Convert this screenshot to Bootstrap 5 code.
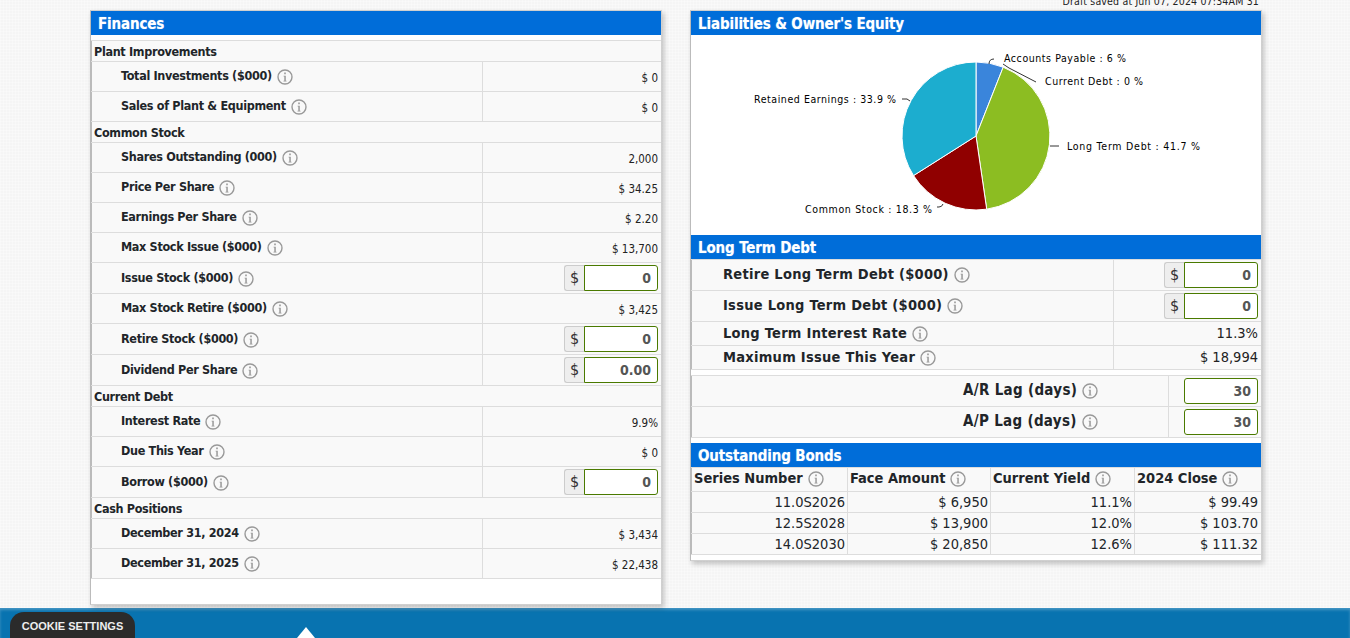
<!DOCTYPE html>
<html lang="en">
<head>
<meta charset="utf-8">
<title>Finances</title>
<link href="https://cdn.jsdelivr.net/npm/bootstrap@5.3.0/dist/css/bootstrap.min.css" rel="stylesheet">
<style>
html,body{height:638px;overflow:hidden}
body{font-family:"DejaVu Sans","Liberation Sans",sans-serif;font-stretch:condensed;color:#000;
  background-color:#f5f5f5;
  background-image:repeating-linear-gradient(0deg,rgba(255,255,255,.35) 0 1px,transparent 1px 3px),repeating-linear-gradient(90deg,rgba(255,255,255,.35) 0 1px,transparent 1px 3px)}
.stage{height:608px}
.draft-line{height:10px;width:1261px;overflow:hidden;font-size:10.5px;line-height:10px;padding:0 2px 4px 0;color:#222;letter-spacing:.17px}
.columns{gap:28px;padding-left:90px}
.panel{width:572px;background:#fff;border:1px solid #d0d0d0;border-left-color:#bbb;box-shadow:2px 3px 5px rgba(0,0,0,.22)}
.panel-left{height:595px}
.panel-right{height:551px}
.bar{background:#006dd9;color:#fff;font-weight:700;font-size:15px;letter-spacing:-.14px;height:24px;line-height:26px;padding-left:7px;text-shadow:0 0 1px rgba(255,255,255,.5)}
.gap5{height:5px}
.fin{width:100%;table-layout:fixed;margin:0;border-collapse:collapse;--bs-table-bg:#f9f9f9;--bs-table-border-color:#ddd;--bs-border-color:#ddd}
.fin>tbody>tr>td{padding:0 3px;vertical-align:middle;border:1px solid #ddd;background:#f9f9f9}
.fin>tbody>tr>td:first-child{border-left:1px solid #bbb}
.fin>tbody>tr>td:last-child{border-right:0}
.fin>tbody>tr.fin-s>td{font-size:12.5px;font-weight:700;line-height:1;letter-spacing:-.33px;padding:2px 3px 0 2px}
.h21 td{height:21px}.h30 td{height:30px}.h31 td{height:31px}.h24 td{height:24px}
.fin>tbody>tr>td.lab{font-weight:700;font-size:12.5px;letter-spacing:-.33px;padding-left:29px;line-height:1}
.fin:not(.big)>tbody>tr.h31>td.lab{padding-top:2px}
.fin>tbody>tr>td.val{text-align:right;font-size:11.5px;color:#222;line-height:1;padding-top:4px}
.fin.big>tbody>tr>td.lab{font-size:14.5px;letter-spacing:.27px;padding-left:31px}
.fin.big>tbody>tr>td.val{font-size:14.5px;padding-top:0}
.fin.ar>tbody>tr>td.lab{padding-left:271px;font-size:15px;letter-spacing:.3px}
.ii{width:16px;height:16px;margin-left:5px;vertical-align:-5px}
.big .ii,.bonds .ii{vertical-align:-4px}
.inp-grp{display:flex;justify-content:flex-end}
.add-on{width:20px;height:26px;background:#eee;border:1px solid #ccc;border-right:0;border-radius:3px 0 0 3px;font-size:16px;text-align:center;line-height:24px;color:#333}
.inp-box{width:74px;height:26px;padding:0 6px;border:1px solid #4a7a00;border-radius:3px;background:#fff;text-align:right;font-weight:700;font-size:14px;color:#555;font-family:inherit;font-stretch:inherit;outline:0}
.add-on+.inp-box{border-top-left-radius:0;border-bottom-left-radius:0}
.bonds td{font-size:14.5px;line-height:1}
.fin.bonds>tbody>tr.hd>td{font-weight:700;text-align:left;padding:0 2px 2px}
.fin.bonds>tbody>tr>td.num{text-align:right;padding-right:2px}
.fin.bonds>tbody>tr>td.num:last-child{padding-right:3px}
.chart-wrap{height:200px}
.chart-wrap svg{display:block}
.chart-wrap text{font-family:"DejaVu Sans","Liberation Sans",sans-serif;font-stretch:condensed;font-size:10.5px;fill:#000}
.foot{height:30px;background:#0873b0;box-shadow:inset 0 2px 3px rgba(255,255,255,.25)}
.cookie{margin:4px 0 0 10px;width:125px;height:26px;background:#2b2b2b;border-radius:14px 14px 0 0;color:#eee;font:700 11px/29px "Liberation Sans",Arial,sans-serif;text-align:center}
.tri{margin:19px 0 0 162px;width:0;height:0;border-left:9px solid transparent;border-right:9px solid transparent;border-bottom:11px solid #fff}
</style>
</head>
<body>
<svg width="0" height="0" class="d-block" aria-hidden="true"><symbol id="ii" viewBox="0 0 16 16"><circle cx="8" cy="8" r="7" fill="none" stroke="#999" stroke-width="1.4"/><path d="M7.2 3.6h1.6v1.6H7.2zM6.6 6.7h2.2v5.1h.7v.8H6.5v-.8h.8V7.5h-.7z" fill="#999"/></symbol></svg>
<div class="stage">
  <div class="draft-line d-flex justify-content-end align-items-end">Draft saved at Jun 07, 2024 07:34AM 31</div>
  <div class="columns d-flex align-items-start">
    <section class="panel panel-left">
      <div class="bar">Finances</div>
      <div class="gap5"></div>
      <table class="table fin">
        <colgroup><col style="width:391px"><col></colgroup>
        <tbody>
        <tr class="fin-s h21"><td colspan="2">Plant Improvements</td></tr>
        <tr class="h30"><td class="lab">Total Investments ($000)<svg class="ii"><use href="#ii"/></svg></td><td class="val">$ 0</td></tr>
        <tr class="h30"><td class="lab">Sales of Plant &amp; Equipment<svg class="ii"><use href="#ii"/></svg></td><td class="val">$ 0</td></tr>
        <tr class="fin-s h21"><td colspan="2">Common Stock</td></tr>
        <tr class="h30"><td class="lab">Shares Outstanding (000)<svg class="ii"><use href="#ii"/></svg></td><td class="val">2,000</td></tr>
        <tr class="h30"><td class="lab">Price Per Share<svg class="ii"><use href="#ii"/></svg></td><td class="val">$ 34.25</td></tr>
        <tr class="h30"><td class="lab">Earnings Per Share<svg class="ii"><use href="#ii"/></svg></td><td class="val">$ 2.20</td></tr>
        <tr class="h30"><td class="lab">Max Stock Issue ($000)<svg class="ii"><use href="#ii"/></svg></td><td class="val">$ 13,700</td></tr>
        <tr class="h31"><td class="lab">Issue Stock ($000)<svg class="ii"><use href="#ii"/></svg></td><td><div class="inp-grp"><span class="add-on">$</span><input class="inp-box" value="0"></div></td></tr>
        <tr class="h30"><td class="lab">Max Stock Retire ($000)<svg class="ii"><use href="#ii"/></svg></td><td class="val">$ 3,425</td></tr>
        <tr class="h31"><td class="lab">Retire Stock ($000)<svg class="ii"><use href="#ii"/></svg></td><td><div class="inp-grp"><span class="add-on">$</span><input class="inp-box" value="0"></div></td></tr>
        <tr class="h31"><td class="lab">Dividend Per Share<svg class="ii"><use href="#ii"/></svg></td><td><div class="inp-grp"><span class="add-on">$</span><input class="inp-box" value="0.00"></div></td></tr>
        <tr class="fin-s h21"><td colspan="2">Current Debt</td></tr>
        <tr class="h30"><td class="lab">Interest Rate<svg class="ii"><use href="#ii"/></svg></td><td class="val">9.9%</td></tr>
        <tr class="h30"><td class="lab">Due This Year<svg class="ii"><use href="#ii"/></svg></td><td class="val">$ 0</td></tr>
        <tr class="h31"><td class="lab">Borrow ($000)<svg class="ii"><use href="#ii"/></svg></td><td><div class="inp-grp"><span class="add-on">$</span><input class="inp-box" value="0"></div></td></tr>
        <tr class="fin-s h21"><td colspan="2">Cash Positions</td></tr>
        <tr class="h30"><td class="lab">December 31, 2024<svg class="ii"><use href="#ii"/></svg></td><td class="val">$ 3,434</td></tr>
        <tr class="h30"><td class="lab">December 31, 2025<svg class="ii"><use href="#ii"/></svg></td><td class="val">$ 22,438</td></tr>
        </tbody>
      </table>
    </section>
    <section class="panel panel-right">
      <div class="bar">Liabilities &amp; Owner's Equity</div>
      <div class="chart-wrap">
        <svg width="570" height="200" viewBox="691 35 570 200" role="img" aria-label="Liabilities pie chart">
          <g stroke="#fff" stroke-width="1" stroke-linejoin="round">
            <path d="M976 136V62A74 74 0 0 1 1003.2 67.2Z" fill="#3a85db"/>
            <path d="M976 136L1003.2 67.2A74 74 0 0 1 986.7 209.2Z" fill="#8cbd22"/>
            <path d="M976 136L986.7 209.2A74 74 0 0 1 913.5 175.6Z" fill="#900000"/>
            <path d="M976 136L913.5 175.6A74 74 0 0 1 976 62Z" fill="#1cadcf"/>
          </g>
          <g fill="none" stroke="#333" stroke-width="1">
            <path d="M989 64q0-5 5-5"/>
            <path d="M1003 64l6 4 27 14"/>
            <path d="M1050 146h9"/>
            <path d="M902 99q6-1 8 2"/>
            <path d="M937 207h2q3 0 4-3"/>
          </g>
          <text x="1004" y="62" textLength="122">Accounts Payable : 6 %</text>
          <text x="1045" y="85" textLength="98">Current Debt : 0 %</text>
          <text x="1067" y="150" textLength="133">Long Term Debt : 41.7 %</text>
          <text x="754" y="103" textLength="142">Retained Earnings : 33.9 %</text>
          <text x="805" y="213" textLength="127">Common Stock : 18.3 %</text>
        </svg>
      </div>
      <div class="bar">Long Term Debt</div>
      <table class="table fin big">
        <colgroup><col style="width:422px"><col></colgroup>
        <tbody>
        <tr class="h31"><td class="lab">Retire Long Term Debt ($000)<svg class="ii"><use href="#ii"/></svg></td><td><div class="inp-grp"><span class="add-on">$</span><input class="inp-box" value="0"></div></td></tr>
        <tr class="h31"><td class="lab">Issue Long Term Debt ($000)<svg class="ii"><use href="#ii"/></svg></td><td><div class="inp-grp"><span class="add-on">$</span><input class="inp-box" value="0"></div></td></tr>
        <tr class="h24"><td class="lab">Long Term Interest Rate<svg class="ii"><use href="#ii"/></svg></td><td class="val">11.3%</td></tr>
        <tr class="h24"><td class="lab">Maximum Issue This Year<svg class="ii"><use href="#ii"/></svg></td><td class="val">$ 18,994</td></tr>
        </tbody>
      </table>
      <div class="gap5"></div>
      <table class="table fin big ar">
        <colgroup><col style="width:477px"><col></colgroup>
        <tbody>
        <tr class="h31"><td class="lab">A/R Lag (days)<svg class="ii"><use href="#ii"/></svg></td><td><div class="inp-grp"><input class="inp-box" value="30"></div></td></tr>
        <tr class="h31"><td class="lab">A/P Lag (days)<svg class="ii"><use href="#ii"/></svg></td><td><div class="inp-grp"><input class="inp-box" value="30"></div></td></tr>
        </tbody>
      </table>
      <div class="gap5"></div>
      <div class="bar">Outstanding Bonds</div>
      <table class="table fin bonds">
        <colgroup><col style="width:156px"><col style="width:143px"><col style="width:144px"><col></colgroup>
        <tbody>
        <tr class="hd h24"><td>Series Number<svg class="ii"><use href="#ii"/></svg></td><td>Face Amount<svg class="ii"><use href="#ii"/></svg></td><td>Current Yield<svg class="ii"><use href="#ii"/></svg></td><td>2024 Close<svg class="ii"><use href="#ii"/></svg></td></tr>
        <tr class="h21"><td class="num">11.0S2026</td><td class="num">$ 6,950</td><td class="num">11.1%</td><td class="num">$ 99.49</td></tr>
        <tr class="h21"><td class="num">12.5S2028</td><td class="num">$ 13,900</td><td class="num">12.0%</td><td class="num">$ 103.70</td></tr>
        <tr class="h21"><td class="num">14.0S2030</td><td class="num">$ 20,850</td><td class="num">12.6%</td><td class="num">$ 111.32</td></tr>
        </tbody>
      </table>
    </section>
  </div>
</div>
<footer class="foot d-flex align-items-start">
  <div class="cookie">COOKIE SETTINGS</div>
  <div class="tri"></div>
</footer>
<script src="https://cdn.jsdelivr.net/npm/bootstrap@5.3.0/dist/js/bootstrap.bundle.min.js"></script>
</body>
</html>
